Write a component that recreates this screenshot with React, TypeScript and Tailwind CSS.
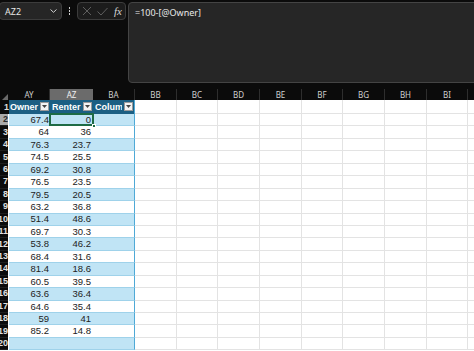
import React from 'react';

const rows: ([number, number] | null)[] = [
  [67.4, 0], [64, 36], [76.3, 23.7], [74.5, 25.5], [69.2, 30.8], [76.5, 23.5],
  [79.5, 20.5], [63.2, 36.8], [51.4, 48.6], [69.7, 30.3], [53.8, 46.2], [68.4, 31.6],
  [81.4, 18.6], [60.5, 39.5], [63.6, 36.4], [64.6, 35.4], [59, 41], [85.2, 14.8], null,
];

const emptyCols = [
  { label: 'BB', w: 'w-[42px]' },
  { label: 'BC', w: 'w-[41px]' },
  { label: 'BD', w: 'w-[42px]' },
  { label: 'BE', w: 'w-[42px]' },
  { label: 'BF', w: 'w-[41px]' },
  { label: 'BG', w: 'w-[42px]' },
  { label: 'BH', w: 'w-[42px]' },
  { label: 'BI', w: 'w-[41px]' },
  { label: '', w: 'w-[42px]' },
];

const FilterButton = () => (
  <div className="absolute right-[1px] top-[2px] w-[9px] h-[9px] bg-[#f3f3f3] border border-[#9a9a9a] flex items-center justify-center">
    <svg width="5" height="3" viewBox="0 0 5 3">
      <path d="M0 0 L5 0 L2.5 3 Z" fill="#444" />
    </svg>
  </div>
);

export default function App() {
  return (
    <div className="w-[474px] h-[351px] bg-[#0b0b0b] overflow-hidden flex flex-col font-['Noto_Sans',sans-serif]">
      {/* Formula bar area */}
      <div className="h-[88px] flex items-start pt-[2px] shrink-0">
        <div className="w-[63px] shrink-0 h-[18px] -ml-[1px] rounded-[4px] border border-[#3c3c3c] bg-[#262626] flex items-center justify-between pl-[5px] pr-[4px]">
          <span className="text-[9px] text-[#e6e6e6] leading-none">AZ2</span>
          <svg width="7" height="4" viewBox="0 0 7 4">
            <path d="M0.5 0.5 L3.5 3.3 L6.5 0.5" stroke="#cfcfcf" strokeWidth="1" fill="none" />
          </svg>
        </div>
        <div className="w-[15px] shrink-0 h-[18px] flex flex-col items-center justify-center gap-[1.5px]">
          <span className="w-[1.5px] h-[1.5px] bg-[#cfcfcf]" />
          <span className="w-[1.5px] h-[1.5px] bg-[#cfcfcf]" />
          <span className="w-[1.5px] h-[1.5px] bg-[#cfcfcf]" />
        </div>
        <div className="w-[49px] shrink-0 h-[18px] rounded-[4px] border border-[#3c3c3c] bg-[#1c1c1c] flex items-center pl-[4px] gap-[5px]">
          <svg width="10" height="10" viewBox="0 0 10 10">
            <path d="M1 1 L9 9 M9 1 L1 9" stroke="#5e5e5e" strokeWidth="1" />
          </svg>
          <svg width="11" height="9" viewBox="0 0 11 9">
            <path d="M0.5 4.5 L4 8 L10.5 1" stroke="#5e5e5e" strokeWidth="1" fill="none" />
          </svg>
          <span className="text-[11px] italic text-[#d6d6d6] leading-none font-['Liberation_Serif',serif] ml-[1px]">fx</span>
        </div>
        <div className="flex-1 h-[81px] ml-[2px] -mr-[4px] rounded-[4px] border border-[#444] bg-[#262626] pl-[6px] pt-[4px] text-[9px] leading-[11px] text-[#e8e8e8]">
          =100-[@Owner]
        </div>
      </div>

      {/* Column headers */}
      <div className="h-[12px] mt-[1px] -mb-[1px] flex shrink-0 text-[8px] text-[#cfcfcf] leading-none bg-[#0b0b0b]">
        <div className="w-[9px] shrink-0 h-full relative">
          <svg className="absolute right-[1px] bottom-[1px]" width="6" height="6" viewBox="0 0 6 6">
            <path d="M6 0 L6 6 L0 6 Z" fill="#6a6a6a" />
          </svg>
        </div>
        <div className="w-[41px] shrink-0 h-full flex items-center justify-center border-r border-[#2e2e2e]">AY</div>
        <div className="w-[43px] shrink-0 h-full flex items-center justify-center bg-[#6b6b6b] text-[#f0f0f0]">AZ</div>
        <div className="w-[42px] shrink-0 h-full flex items-center justify-center border-r border-[#2e2e2e]">BA</div>
        {emptyCols.map((c, i) => (
          <div key={i} className={`${c.w} h-full shrink-0 flex items-center justify-center border-r border-[#2e2e2e]`}>
            {c.label}
          </div>
        ))}
      </div>

      {/* Sheet body */}
      <div className="flex-1 bg-white font-['Liberation_Sans',Arial,sans-serif]">
        {/* table header row */}
        <div className="h-[14px] flex">
          <div className="w-[9px] shrink-0 h-full bg-[#0b0b0b] flex justify-end items-center overflow-hidden text-[9px] font-bold text-[#ddd] leading-none">1</div>
          <div className="w-[41px] shrink-0 h-full bg-[#1c5f83] relative text-white font-bold text-[9px] leading-none flex items-center pl-[1px]">
            Owner
            <FilterButton />
          </div>
          <div className="w-[43px] shrink-0 h-full bg-[#1c5f83] relative text-white font-bold text-[9px] leading-none flex items-center pl-[2px]">
            Renter
            <FilterButton />
          </div>
          <div className="w-[42px] shrink-0 h-full bg-[#1c5f83] relative text-white font-bold text-[9px] leading-none flex items-center pl-[2px] overflow-hidden border-r border-[#4fa9d6]">
            <span className="whitespace-nowrap">Column1</span>
            <div className="absolute right-0 top-0 w-[12px] h-full bg-[#1c5f83]" />
            <FilterButton />
          </div>
          {emptyCols.map((c, i) => (
            <div key={i} className={`${c.w} h-full shrink-0 border-r border-b border-[#e3e3e3]`} />
          ))}
        </div>

        {rows.map((r, i) => {
          const n = i + 2;
          const band = n % 2 === 0;
          const selected = n === 2;
          const cellBg = band ? 'bg-[#c0e4f5]' : 'bg-white';
          return (
            <div key={n} className="h-[12.45px] flex text-[9.5px] text-[#222] leading-none">
              <div
                className={`w-[8px] mr-[1px] shrink-0 h-full flex justify-end items-center overflow-hidden text-[9px] font-bold leading-none border-b border-[#1e1e1e] ${
                  selected ? 'bg-[#a9a9a9] text-[#2a2a2a]' : 'bg-[#0b0b0b] text-[#e0e0e0]'
                }`}
              >
                {n}
              </div>
              <div className={`w-[41px] shrink-0 h-full ${cellBg} border-b border-[#9fd2ea] flex items-center justify-end pr-[1px]`}>
                {r ? r[0] : ''}
              </div>
              <div className={`w-[43px] shrink-0 h-full ${cellBg} border-b border-[#9fd2ea] flex items-center justify-end pr-[2px] relative`}>
                {r ? r[1] : ''}
                {selected && (
                  <>
                    <div className="absolute -left-[1px] -top-[1px] -right-[1px] -bottom-[1px] border-2 border-[#1e6b45]" />
                    <div className="absolute -right-[3px] -bottom-[3px] w-[4px] h-[4px] bg-[#1e6b45] border border-white" />
                  </>
                )}
              </div>
              <div className={`w-[42px] shrink-0 h-full ${cellBg} border-b border-r border-b-[#9fd2ea] border-r-[#4fa9d6]`} />
              {emptyCols.map((c, j) => (
                <div key={j} className={`${c.w} h-full shrink-0 border-r border-b border-[#e3e3e3]`} />
              ))}
            </div>
          );
        })}
      </div>
    </div>
  );
}
